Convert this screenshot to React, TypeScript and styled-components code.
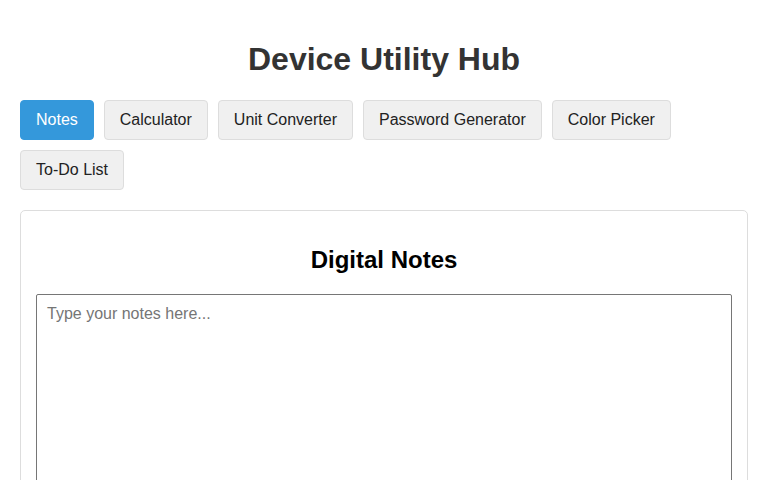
import { useState } from "react";
import styled, { createGlobalStyle, css } from "styled-components";

const GlobalStyle = createGlobalStyle`
  body {
    margin: 0;
    padding: 20px;
    font-family: "Liberation Sans", Arial, sans-serif;
    background: #fff;
    color: #000;
  }
`;

const Title = styled.h1`
  text-align: center;
  color: #333;
  font-size: 32px;
  margin: 21px 0 22px;
`;

const Tabs = styled.nav`
  display: flex;
  flex-wrap: wrap;
  gap: 10px;
  margin-bottom: 20px;
`;

const TabButton = styled.button<{ $active: boolean }>`
  font-family: inherit;
  font-size: 16px;
  line-height: 18px;
  padding: 10px 15px;
  border: 1px solid #ddd;
  border-radius: 4px;
  background: #f0f0f0;
  color: #222;
  cursor: pointer;

  ${(props) =>
    props.$active &&
    css`
      background: #3498db;
      border-color: #3498db;
      color: #fff;
    `}
`;

const Card = styled.section`
  border: 1px solid #ddd;
  border-radius: 5px;
  padding: 15px;
  background: #fff;
`;

const CardTitle = styled.h2`
  text-align: center;
  font-size: 24px;
  margin: 20px 0;
`;

const NotesArea = styled.textarea`
  display: block;
  box-sizing: border-box;
  width: 100%;
  height: 300px;
  padding: 10px;
  font-family: inherit;
  font-size: 16px;
  border: 1px solid #767676;
  border-radius: 2px;
  resize: vertical;

  &::placeholder {
    color: #757575;
  }
`;

const tools = [
  "Notes",
  "Calculator",
  "Unit Converter",
  "Password Generator",
  "Color Picker",
  "To-Do List",
];

function App() {
  const [active, setActive] = useState("Notes");
  const [notes, setNotes] = useState("");

  return (
    <>
      <GlobalStyle />
      <Title>Device Utility Hub</Title>
      <Tabs>
        {tools.map((tool) => (
          <TabButton
            key={tool}
            $active={tool === active}
            onClick={() => setActive(tool)}
          >
            {tool}
          </TabButton>
        ))}
      </Tabs>
      <Card>
        <CardTitle>Digital Notes</CardTitle>
        <NotesArea
          placeholder="Type your notes here..."
          value={notes}
          onChange={(e) => setNotes(e.target.value)}
        />
      </Card>
    </>
  );
}

export default App;
